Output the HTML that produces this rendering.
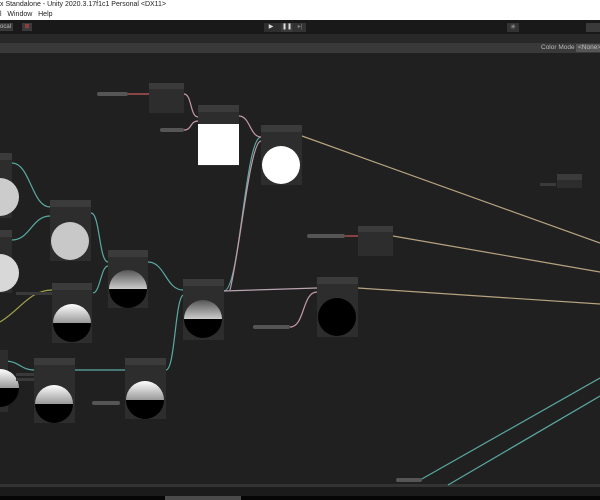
<!DOCTYPE html>
<html><head><style>
body{margin:0;width:600px;height:500px;overflow:hidden;background:#202020;font-family:"Liberation Sans",sans-serif;position:relative}
.t{position:absolute;left:0;width:600px;background:#fff;color:#222;font-size:7px}
</style></head><body>
<div class="t" style="top:0;height:10px;line-height:10px;padding-left:0">x Standalone - Unity 2020.3.17f1c1 Personal &lt;DX11&gt;</div>
<div class="t" style="top:10px;height:10px;line-height:10px">l&nbsp;&nbsp; Window&nbsp;&nbsp; Help</div>
<div style="position:absolute;top:20px;left:0;width:600px;height:14px;background:#191919"></div>
<div style="position:absolute;top:23px;left:0;width:13px;height:8px;background:#3a3a3a;color:#bbb;font-size:6px;line-height:8px">ocal</div>
<div style="position:absolute;top:23px;left:22px;width:10px;height:8px;background:#3a3a3a;color:#c44;font-size:6px;line-height:8px;text-align:center">⊠</div>
<div style="position:absolute;top:23px;left:264px;width:42px;height:9px;background:#2e2e2e"></div>
<div style="position:absolute;top:23px;left:265px;width:12px;height:9px;color:#ddd;font-size:6px;line-height:9px;text-align:center">▶</div>
<div style="position:absolute;top:23px;left:281px;width:12px;height:9px;background:#3a3a3a;color:#ddd;font-size:6px;line-height:9px;text-align:center">❚❚</div>
<div style="position:absolute;top:23px;left:294px;width:12px;height:9px;background:#333;color:#888;font-size:6px;line-height:9px;text-align:center">▸|</div>
<div style="position:absolute;top:23px;left:507px;width:12px;height:9px;background:#333;color:#aaa;font-size:7px;line-height:9px;text-align:center">✳</div>
<div style="position:absolute;top:23px;left:586px;width:14px;height:9px;background:#3a3a3a"></div>
<div style="position:absolute;top:34px;left:0;width:600px;height:9px;background:#282828"></div>
<div style="position:absolute;top:43px;left:0;width:600px;height:10px;background:#393939;color:#bbb;font-size:6.5px;line-height:10px"><span style="position:absolute;left:541px">Color Mode</span><span style="position:absolute;left:576px;top:1px;height:8px;line-height:8px;background:#555;padding:0 2px">&lt;None&gt;</span></div>
<div style="position:absolute;top:484px;left:0;width:600px;height:3px;background:#333"></div>
<div style="position:absolute;top:487px;left:0;width:600px;height:9px;background:#1b1b1b"></div>
<div style="position:absolute;top:496px;left:0;width:600px;height:4px;background:#060606"></div>
<div style="position:absolute;top:496px;left:165px;width:76px;height:4px;background:#4a4a4a"></div>
<svg width="600" height="500" style="position:absolute;left:0;top:0" viewBox="0 0 600 500">
<defs>
<linearGradient id="g" x1="0" y1="0" x2="0" y2="1"><stop offset="0" stop-color="#fff"/><stop offset="0.5" stop-color="#999"/><stop offset="0.5" stop-color="#000"/><stop offset="1" stop-color="#000"/></linearGradient>
<linearGradient id="g2" x1="0" y1="0" x2="0" y2="1"><stop offset="0" stop-color="#555"/><stop offset="0.5" stop-color="#ccc"/><stop offset="0.5" stop-color="#000"/><stop offset="1" stop-color="#000"/></linearGradient>
</defs>
<g fill="none" stroke-width="1.2">
<g stroke="#5aa9a2">
<path d="M12 163 C30 163 32 207 50 207"/>
<path d="M12 240 C30 240 32 216 50 216"/>
<path d="M91 213 C100 213 99 262 108 262"/>
<path d="M93 293 C100 293 101 266 108 266"/>
<path d="M148 262 C165 262 166 290 183 290"/>
<path d="M224 291 C240 291 245 137 261 137"/>
<path d="M224 291 L317 288" stroke="#b9a4b0"/>
<path d="M4 361 C20 361 20 370 35 370"/>
<path d="M75 370 L125 370"/>
<path d="M166 370 C175 370 175 300 183 295"/>
<path d="M420 480 L600 378"/>
<path d="M448 485 L600 396"/>
</g>
<g stroke="#c59aa8">
<path d="M128 94 L149 94" stroke="#c85a5a"/>
<path d="M184 94 C192 94 190 117 198 117"/>
<path d="M184 130 C192 130 190 121 198 121"/>
<path d="M239 116 C250 116 250 137 261 137"/>
<path d="M261 141 C250 141 240 250 230 290"/>
<path d="M290 327 C305 327 302 292 317 292"/>
<path d="M345 236 L358 236" stroke="#c85a5a"/>
</g>
<g stroke="#b6a380">
<path d="M302 136 L600 243"/>
<path d="M393 236 L600 272"/>
<path d="M358 288 L600 304"/>
</g>
<path d="M52 290 C30 290 20 310 0 322" stroke="#a3a24e"/>
</g>
<g font-size="3" fill="#bbb">
<rect x="149" y="83" width="35" height="30" fill="#2d2d2d"/><rect x="149" y="83" width="35" height="6" fill="#3b3b3b"/>
<rect x="198" y="105" width="41" height="61" fill="#2d2d2d"/><rect x="198" y="105" width="41" height="7" fill="#3b3b3b"/><rect x="198" y="124" width="41" height="41" fill="#fff"/>
<rect x="261" y="125" width="41" height="60" fill="#2d2d2d"/><rect x="261" y="125" width="41" height="7" fill="#3b3b3b"/><circle cx="281" cy="165" r="19" fill="#fff"/>
<rect x="-2" y="153" width="14" height="65" fill="#2d2d2d"/><rect x="-2" y="153" width="14" height="7" fill="#3b3b3b"/><circle cx="0" cy="197" r="19" fill="#ccc"/>
<rect x="-2" y="230" width="14" height="63" fill="#2d2d2d"/><rect x="-2" y="230" width="14" height="7" fill="#3b3b3b"/><circle cx="0" cy="273" r="19" fill="#d8d8d8"/>
<rect x="50" y="200" width="41" height="61" fill="#2d2d2d"/><rect x="50" y="200" width="41" height="7" fill="#3b3b3b"/><circle cx="70" cy="241" r="19" fill="#c8c8c8"/>
<rect x="108" y="250" width="40" height="58" fill="#2d2d2d"/><rect x="108" y="250" width="40" height="7" fill="#3b3b3b"/><circle cx="128" cy="289" r="19" fill="url(#g2)"/>
<rect x="52" y="283" width="40" height="60" fill="#2d2d2d"/><rect x="52" y="283" width="40" height="7" fill="#3b3b3b"/><circle cx="72" cy="323" r="19" fill="url(#g)"/>
<rect x="183" y="279" width="41" height="61" fill="#2d2d2d"/><rect x="183" y="279" width="41" height="7" fill="#3b3b3b"/><circle cx="203" cy="319" r="19" fill="url(#g2)"/>
<rect x="317" y="277" width="41" height="60" fill="#2d2d2d"/><rect x="317" y="277" width="41" height="7" fill="#3b3b3b"/><circle cx="337" cy="317" r="19" fill="#000"/>
<rect x="358" y="226" width="35" height="30" fill="#2d2d2d"/><rect x="358" y="226" width="35" height="6" fill="#3b3b3b"/>
<rect x="557" y="174" width="25" height="14" fill="#2d2d2d"/><rect x="557" y="174" width="25" height="6" fill="#3b3b3b"/>
<rect x="-2" y="350" width="10" height="62" fill="#2d2d2d"/><circle cx="0" cy="388" r="19" fill="url(#g)"/>
<rect x="34" y="358" width="41" height="65" fill="#2d2d2d"/><rect x="34" y="358" width="41" height="7" fill="#3b3b3b"/><circle cx="54" cy="404" r="19" fill="url(#g)"/>
<rect x="125" y="358" width="41" height="61" fill="#2d2d2d"/><rect x="125" y="358" width="41" height="7" fill="#3b3b3b"/><circle cx="145" cy="400" r="19" fill="url(#g)"/>
<rect x="97" y="92" width="31" height="4" rx="2" fill="#555"/>
<rect x="160" y="128" width="24" height="4" rx="2" fill="#555"/>
<rect x="307" y="234" width="38" height="4" rx="2" fill="#555"/>
<rect x="253" y="325" width="37" height="4" rx="2" fill="#555"/>
<rect x="92" y="401" width="28" height="4" rx="2" fill="#555"/>
<rect x="396" y="478" width="26" height="4" rx="2" fill="#555"/>
<rect x="540" y="183" width="16" height="3" fill="#3a3a3a"/>
<rect x="16" y="292" width="36" height="3" fill="#3a3a3a"/>
<rect x="16" y="373" width="18" height="3" fill="#3a3a3a"/><rect x="16" y="378" width="18" height="3" fill="#3a3a3a"/>
</g>
</svg>
</body></html>
